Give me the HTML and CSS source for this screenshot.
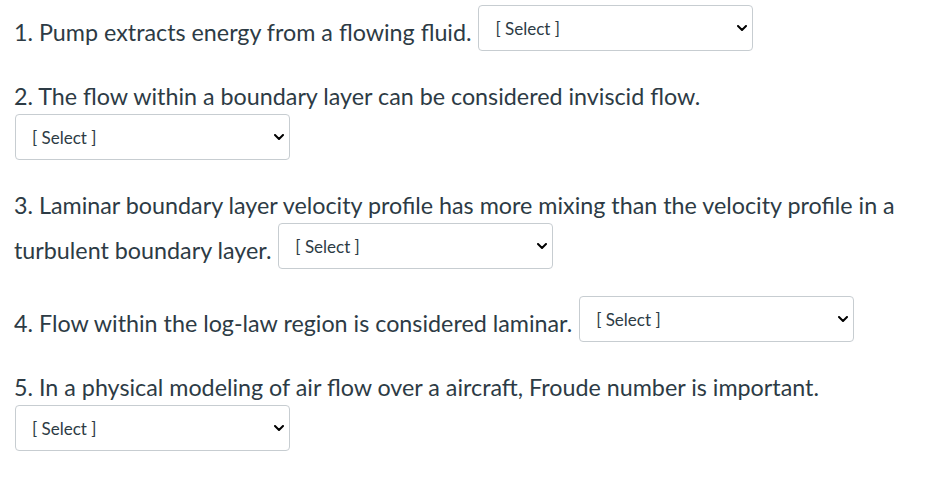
FILE: index.html
```html
<!DOCTYPE html>
<html lang="en">
<head>
<meta charset="utf-8">
<title>Quiz</title>
<link rel="stylesheet" href="styles.css">
</head>
<body>
<div class="quiz">
  <p class="question">1. Pump extracts energy from a flowing fluid. <span class="select-wrap"><select class="select"><option>[ Select ]</option></select><svg class="chevron" viewBox="0 0 10 6" width="10" height="6"><path d="M1 1 L5 5 L9 1" fill="none" stroke="#000" stroke-width="2" stroke-linecap="round" stroke-linejoin="round"/></svg></span></p>
  <p class="question">2. The flow within a boundary layer can be considered inviscid flow. <span class="select-wrap"><select class="select"><option>[ Select ]</option></select><svg class="chevron" viewBox="0 0 10 6" width="10" height="6"><path d="M1 1 L5 5 L9 1" fill="none" stroke="#000" stroke-width="2" stroke-linecap="round" stroke-linejoin="round"/></svg></span></p>
  <p class="question">3. Laminar boundary layer velocity profile has more mixing than the velocity profile in a turbulent boundary layer. <span class="select-wrap"><select class="select"><option>[ Select ]</option></select><svg class="chevron" viewBox="0 0 10 6" width="10" height="6"><path d="M1 1 L5 5 L9 1" fill="none" stroke="#000" stroke-width="2" stroke-linecap="round" stroke-linejoin="round"/></svg></span></p>
  <p class="question">4. Flow within the log-law region is considered laminar. <span class="select-wrap"><select class="select"><option>[ Select ]</option></select><svg class="chevron" viewBox="0 0 10 6" width="10" height="6"><path d="M1 1 L5 5 L9 1" fill="none" stroke="#000" stroke-width="2" stroke-linecap="round" stroke-linejoin="round"/></svg></span></p>
  <p class="question">5. In a physical modeling of air flow over a aircraft, Froude number is important. <span class="select-wrap"><select class="select"><option>[ Select ]</option></select><svg class="chevron" viewBox="0 0 10 6" width="10" height="6"><path d="M1 1 L5 5 L9 1" fill="none" stroke="#000" stroke-width="2" stroke-linecap="round" stroke-linejoin="round"/></svg></span></p>
</div>
</body>
</html>
```
FILE: styles.css
```css
html, body {
  margin: 0;
  padding: 0;
  background: #ffffff;
}

.quiz {
  padding: 5px 14px 0 14px;
  font-family: Lato, "Liberation Sans", sans-serif;
  font-size: 23.3px;
  line-height: 1.55;
  color: #2d3b45;
}

.question {
  margin: 0 0 27px 0;
}

.select-wrap {
  position: relative;
  display: inline-block;
  vertical-align: 6px;
  margin-left: 1px;
}

.select {
  appearance: none;
  -webkit-appearance: none;
  display: block;
  width: 275px;
  height: 46px;
  box-sizing: border-box;
  padding: 0 30px 0 16px;
  border: 1px solid #c7cdd1;
  border-radius: 4px;
  background: #ffffff;
  font-family: Lato, "Liberation Sans", sans-serif;
  font-size: 17px;
  color: #2d3b45;
  margin: 0;
}

.chevron {
  position: absolute;
  right: 6px;
  top: 20px;
  pointer-events: none;
}
```
